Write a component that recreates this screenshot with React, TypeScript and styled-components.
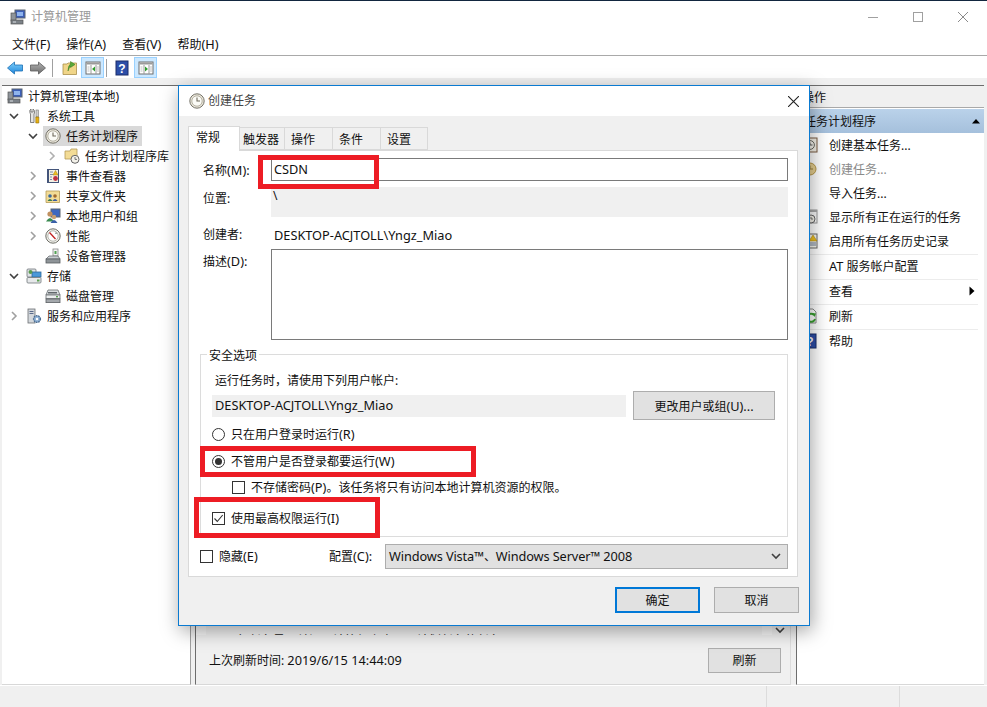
import React from 'react';
import styled, { createGlobalStyle } from 'styled-components';

const GlobalStyle = createGlobalStyle`
  html, body {
    margin: 0;
    padding: 0;
    background: #f0f0f0;
  }
  body {
    font-family: "Noto Sans", "Noto Sans CJK SC", sans-serif;
    font-size: 12px;
    color: #111;
  }
`;

const Latin = styled.span`
  font-size: 12.75px;
`;

const Page = styled.div`
  position: relative;
  width: 987px;
  height: 707px;
  overflow: hidden;
  display: flex;
  flex-direction: column;
  background: #f0f0f0;
  border-top: 1px solid #12263f;
  box-sizing: border-box;
`;

const TitleBar = styled.div`
  height: 32px;
  flex: none;
  box-sizing: border-box;
  display: flex;
  align-items: center;
  padding: 0 0 1px 10px;
  background: #fff;
`;

const TitleText = styled.span`
  margin-left: 5px;
  padding-bottom: 1px;
  color: #999;
  font-size: 12px;
`;

const WindowButtons = styled.div`
  margin-left: auto;
  display: flex;
  align-items: center;
  padding-right: 19px;
  gap: 35px;
`;

const MenuBar = styled.div`
  height: 22px;
  flex: none;
  display: flex;
  align-items: center;
  padding-left: 12px;
  gap: 16px;
  background: #fff;
  border-bottom: 1px solid #a9a9a9;
`;

const ToolBar = styled.div`
  height: 22px;
  flex: none;
  box-sizing: border-box;
  display: flex;
  align-items: center;
  padding: 1px 0 0 7px;
  background: #fff;
`;

const ToolGap = styled.div<{ $w: number }>`
  width: ${(p) => p.$w}px;
  flex: none;
`;

const ToolSep = styled.div`
  width: 1px;
  height: 18px;
  background: #a0a0a0;
  flex: none;
`;

const ToolToggle = styled.div`
  width: 23px;
  height: 21px;
  box-sizing: border-box;
  display: flex;
  align-items: center;
  justify-content: center;
  background: #cce8ff;
  border: 1px solid #99d1ff;
  flex: none;
`;

const Workspace = styled.div`
  margin-top: 7px;
  flex: none;
  height: 600px;
  display: flex;
  padding-left: 2px;
  padding-right: 2px;
  border-bottom: 1px solid #fff;
`;

const TreePane = styled.div`
  width: 189px;
  flex: none;
  background: #fff;
  border-top: 1px solid #6d6d6d;
  border-right: 1px solid #a0a0a0;
  border-bottom: 1px solid #d8d8d8;
  box-sizing: border-box;
`;

const TreeRow = styled.div<{ $level: number }>`
  height: 20px;
  display: flex;
  align-items: center;
  padding-left: ${(p) => (p.$level === 0 ? 3 : p.$level * 19 - 15)}px;
`;

const ChevronSlot = styled.div`
  width: 16px;
  height: 16px;
  flex: none;
  margin-right: 2px;
  display: flex;
  align-items: center;
  justify-content: center;
`;

const TreeLabel = styled.div<{ $selected?: boolean }>`
  height: 20px;
  display: flex;
  align-items: center;
  gap: 5px;
  padding: 0 4px 0 2px;
  white-space: nowrap;
  background: ${(p) => (p.$selected ? '#d9d9d9' : 'transparent')};
`;

const CenterPane = styled.div`
  margin-left: 4px;
  width: 596px;
  flex: none;
  display: flex;
  flex-direction: column;
  background: #f0f0f0;
  box-sizing: border-box;
  border-left: 1px solid #6d6d6d;
  border-top: 1px solid #6d6d6d;
  border-right: 1px solid #dcdcdc;
  border-bottom: 1px solid #d8d8d8;
`;

const ScrollArea = styled.div`
  flex: 1;
  display: flex;
  align-items: flex-end;
  justify-content: space-between;
  overflow: hidden;
`;

const SectionTile = styled.div`
  width: 10px;
  height: 14px;
  background: #f7f7f7;
  flex: none;
`;

const ClippedText = styled.div`
  margin-left: 19px;
  margin-bottom: -14px;
  white-space: nowrap;
  color: #222;
`;

const ScrollGutter = styled.div`
  margin-left: auto;
  display: flex;
  align-items: flex-end;
  gap: 3px;
  padding-right: 5px;
`;

const CenterFooter = styled.div`
  height: 49px;
  flex: none;
  box-sizing: border-box;
  display: flex;
  align-items: center;
  justify-content: space-between;
  padding: 1px 9px 0 13px;
`;

const ActionPane = styled.div`
  margin-left: 5px;
  width: 188px;
  flex: none;
  background: #fff;
  box-sizing: border-box;
  border-left: 1px solid #6d6d6d;
  border-top: 1px solid #6d6d6d;
  border-bottom: 1px solid #d8d8d8;
`;

const ActionHeader = styled.div`
  height: 21px;
  display: flex;
  align-items: center;
  padding-left: 5px;
  background: #f0f0f0;
  border-bottom: 1px solid #a9a9a9;
`;

const ActionGroup = styled.div`
  margin-top: 1px;
  height: 24px;
  display: flex;
  align-items: center;
  justify-content: space-between;
  padding: 0 3px 0 7px;
  background: linear-gradient(#bad2ea, #a5c0dc);
`;

const ActionRow = styled.div<{ $disabled?: boolean; $tall?: boolean; $rule?: boolean }>`
  height: ${(p) => (p.$tall ? 25 : 24)}px;
  box-sizing: border-box;
  display: flex;
  align-items: center;
  padding: 0 1px ${(p) => (p.$tall ? 1 : 0)}px 5px;
  gap: 11px;
  white-space: nowrap;
  margin-right: 6px;
  color: ${(p) => (p.$disabled ? '#8a8a8a' : '#111')};
  box-shadow: ${(p) => (p.$rule ? '0 1px 0 #ececec' : 'none')};
`;

const ActionIconSlot = styled.div`
  width: 16px;
  height: 16px;
  flex: none;
`;

const RowEnd = styled.div`
  margin-left: auto;
  display: flex;
`;

const StatusBar = styled.div`
  flex: 1;
  display: flex;
  justify-content: flex-end;
  padding-right: 3px;
`;

const StatusCell = styled.div<{ $w: number }>`
  width: ${(p) => p.$w}px;
  box-sizing: border-box;
  border-left: 1px solid #dcdcdc;
`;

const Dialog = styled.div`
  position: absolute;
  left: 178px;
  top: 84px;
  width: 632px;
  height: 541px;
  box-sizing: border-box;
  display: flex;
  flex-direction: column;
  background: #f0f0f0;
  border: 1px solid #0a7ad1;
  box-shadow: 2px 5px 18px rgba(0, 0, 0, 0.36);
`;

const DialogTitle = styled.div`
  height: 30px;
  flex: none;
  display: flex;
  align-items: center;
  padding: 0 10px 0 10px;
  background: #fff;
`;

const DialogTitleText = styled.span`
  margin-left: 3px;
  padding-bottom: 2px;
  color: #444;
`;

const DialogClose = styled.div`
  margin-left: auto;
  display: flex;
`;

const DialogBody = styled.div`
  flex: 1;
  display: flex;
  flex-direction: column;
  padding: 10px 11px 0 9px;
`;

const Tabs = styled.div`
  height: 24px;
  flex: none;
  display: flex;
  align-items: flex-end;
  position: relative;
  z-index: 1;
`;

const Tab = styled.div<{ $active?: boolean; $w: number; $pl: number }>`
  width: ${(p) => p.$w}px;
  height: ${(p) => (p.$active ? 25 : 23)}px;
  box-sizing: border-box;
  display: flex;
  align-items: center;
  padding-left: ${(p) => p.$pl}px;
  padding-bottom: ${(p) => (p.$active ? 4 : 0)}px;
  margin-bottom: ${(p) => (p.$active ? -1 : 0)}px;
  margin-left: ${(p) => (p.$active ? 0 : -1)}px;
  background: ${(p) => (p.$active ? '#fff' : '#f0f0f0')};
  border: 1px solid #d9d9d9;
  border-bottom: ${(p) => (p.$active ? 'none' : '1px solid #d9d9d9')};
`;

const TabPanel = styled.div`
  height: 427px;
  flex: none;
  box-sizing: border-box;
  display: flex;
  flex-direction: column;
  background: #fff;
  border: 1px solid #d9d9d9;
  padding: 7px 9px 0 11px;
`;

const FormRow = styled.div<{ $mt?: number }>`
  display: grid;
  grid-template-columns: 68px 1fr;
  padding-left: 3px;
  margin-top: ${(p) => p.$mt ?? 0}px;
`;

const FieldLabel = styled.div<{ $pt?: number }>`
  padding-top: ${(p) => p.$pt ?? 0}px;
  line-height: 20px;
  white-space: nowrap;
`;

const TextInput = styled.div`
  height: 23px;
  box-sizing: border-box;
  border: 1px solid #7a7a7a;
  padding-left: 2px;
  line-height: 21px;
`;

const ReadOnlyBox = styled.div`
  height: 30px;
  background: #f0f0f0;
  padding-left: 2px;
  line-height: 18px;
`;

const PlainValue = styled.div`
  padding-left: 3px;
  line-height: 20px;
`;

const TextArea = styled.div`
  height: 91px;
  box-sizing: border-box;
  border: 1px solid #7a7a7a;
`;

const GroupBox = styled.div`
  position: relative;
  margin-top: 14px;
  height: 183px;
  flex: none;
  box-sizing: border-box;
  border: 1px solid #dcdcdc;
  padding: 17px 12px 0 11px;
`;

const GroupLegend = styled.div`
  position: absolute;
  left: 6px;
  top: -8px;
  padding: 0 2px;
  line-height: 18px;
  background: #fff;
`;

const GroupIntro = styled.div`
  line-height: 18px;
  padding-left: 3px;
`;

const AccountRow = styled.div`
  display: flex;
  align-items: center;
  margin-top: 1px;
  gap: 7px;
`;

const AccountBox = styled.div`
  flex: 1;
  height: 22px;
  background: #f0f0f0;
  padding-left: 3px;
  line-height: 20px;
  overflow: hidden;
`;

const PushButton = styled.div<{ $w: number; $h?: number; $default?: boolean }>`
  width: ${(p) => p.$w}px;
  height: ${(p) => p.$h ?? 26}px;
  flex: none;
  box-sizing: border-box;
  display: flex;
  align-items: center;
  justify-content: center;
  background: #e1e1e1;
  border: ${(p) => (p.$default ? '2px solid #0078d7' : '1px solid #adadad')};
  white-space: nowrap;
`;

const OptionRow = styled.div<{ $mt: number; $indent?: number }>`
  height: 20px;
  display: flex;
  align-items: center;
  gap: 6px;
  margin-top: ${(p) => p.$mt}px;
  padding-left: ${(p) => p.$indent ?? 0}px;
  white-space: nowrap;
`;

const Radio = styled.div<{ $on?: boolean }>`
  width: 13px;
  height: 13px;
  flex: none;
  box-sizing: border-box;
  border: 1px solid #333;
  border-radius: 50%;
  display: flex;
  align-items: center;
  justify-content: center;
  &::after {
    content: '';
    width: 7px;
    height: 7px;
    border-radius: 50%;
    background: ${(p) => (p.$on ? '#333' : 'transparent')};
  }
`;

const CheckBox = styled.div`
  width: 13px;
  height: 13px;
  flex: none;
  box-sizing: border-box;
  border: 1px solid #333;
  display: flex;
  align-items: center;
  justify-content: center;
`;

const BottomRow = styled.div`
  margin-top: 7px;
  height: 25px;
  display: flex;
  align-items: center;
`;

const HiddenOption = styled.div`
  width: 129px;
  flex: none;
  display: flex;
  align-items: center;
  gap: 6px;
  padding-bottom: 1px;
`;

const ConfigLabel = styled.div`
  width: 56px;
  flex: none;
  padding-bottom: 2px;
`;

const SelectBox = styled.div`
  flex: 1;
  height: 25px;
  box-sizing: border-box;
  display: flex;
  align-items: center;
  justify-content: space-between;
  padding: 0 6px 2px 3px;
  letter-spacing: -0.11px;
  background: #e1e1e1;
  border: 1px solid #adadad;
`;

const DialogFooter = styled.div`
  display: flex;
  justify-content: flex-end;
  gap: 14px;
  margin-top: 10px;
  margin-right: -1px;
`;

const Highlight = styled.div<{ $x: number; $y: number; $w: number; $h: number }>`
  position: absolute;
  left: ${(p) => p.$x}px;
  top: ${(p) => p.$y}px;
  width: ${(p) => p.$w}px;
  height: ${(p) => p.$h}px;
  box-sizing: border-box;
  border: 5px solid #ed1c24;
  pointer-events: none;
`;

const Ico = ({ children, size = 16 }: { children: React.ReactNode; size?: number }) => (
  <svg width={size} height={size} viewBox="0 0 16 16" style={{ flex: 'none', display: 'block' }}>
    {children}
  </svg>
);

const ComputerIcon = () => (
  <Ico>
    <rect x="5" y="1" width="10" height="8" fill="#3c5fb8" stroke="#5a6470" />
    <rect x="7" y="3" width="6" height="4" fill="#8fb4ee" />
    <rect x="1" y="4" width="5" height="8" fill="#8e949a" stroke="#555" strokeWidth="0.7" />
    <rect x="1" y="11" width="12" height="4" fill="#7c8288" stroke="#555" strokeWidth="0.7" />
    <rect x="3" y="12.5" width="3" height="1" fill="#d8dce0" />
  </Ico>
);

const ToolsIcon = () => (
  <Ico>
    <path d="M5 1 L5 4 L7 4 L7 1 Q9 2 8.5 5 L8 6 L8 14.5 L4.5 14.5 L4.5 6 L4 5 Q3 2 5 1Z" fill="#e4e4e4" stroke="#666" strokeWidth="0.8" />
    <rect x="10" y="2" width="2.4" height="7" fill="#cfcfcf" stroke="#777" strokeWidth="0.6" />
    <path d="M9.8 9 h3 v6 h-3z" fill="#e8b010" stroke="#8c6a00" strokeWidth="0.6" />
  </Ico>
);

const ClockIcon = () => (
  <Ico>
    <circle cx="8" cy="8" r="7.2" fill="#e9e6da" stroke="#77746a" />
    <circle cx="8" cy="8" r="5.2" fill="#fbfbf6" stroke="#b6b2a4" />
    <path d="M8 4.4 V8 H11" fill="none" stroke="#6f6a5c" strokeWidth="1.1" />
  </Ico>
);

const ClockFolderIcon = () => (
  <Ico>
    <path d="M1 3 h5 l1 -2 h6 v10 h-12z" fill="#f3dc96" stroke="#b49a55" strokeWidth="0.8" />
    <circle cx="11" cy="11.3" r="4" fill="#f4f2ea" stroke="#666" />
    <path d="M11 9 V11.4 H13" fill="none" stroke="#555" strokeWidth="0.8" />
  </Ico>
);

const EventIcon = () => (
  <Ico>
    <rect x="2" y="1" width="12" height="14" fill="#44557a" />
    <rect x="4" y="2" width="9" height="12" fill="#f4f1e4" />
    <path d="M5 4 h3 M5 6.5 h3 M5 9 h2 M5 11.5 h2" stroke="#7c8ca8" />
    <path d="M10.5 2.5 L13 7 H8z" fill="#f0c020" stroke="#a07c10" strokeWidth="0.5" />
    <circle cx="10.5" cy="10.5" r="2.4" fill="#c03040" />
  </Ico>
);

const ShareIcon = () => (
  <Ico>
    <path d="M1 3 h13.5 v11.5 h-13.5z" fill="#f3dc96" stroke="#b49a55" strokeWidth="0.8" />
    <circle cx="5" cy="8" r="1.8" fill="#3a6aa0" />
    <path d="M2.5 13 q2.5 -4 5 0z" fill="#3a7a50" />
    <circle cx="10" cy="8" r="1.8" fill="#a06a30" />
    <path d="M7.5 13 q2.5 -4 5 0z" fill="#3a5aa0" />
  </Ico>
);

const UsersIcon = () => (
  <Ico>
    <rect x="6" y="1" width="9" height="8" fill="#3c68c0" stroke="#5a6470" />
    <circle cx="5" cy="6" r="2.6" fill="#c09060" />
    <path d="M1 13.5 q4 -7 8 0z" fill="#3a8a50" />
    <circle cx="9" cy="9" r="2.2" fill="#c8a070" />
    <path d="M5.5 15 q3.5 -6 7 0z" fill="#3a60a8" />
  </Ico>
);

const GaugeIcon = () => (
  <Ico>
    <circle cx="8" cy="8" r="7.2" fill="#f0f0ea" stroke="#6f6f68" />
    <circle cx="8" cy="8" r="5.2" fill="#fff" stroke="#b8b8b0" />
    <path d="M4.5 4.5 L10.5 11" stroke="#c02020" strokeWidth="1.3" />
    <path d="M11 4.5 v1.5" stroke="#555" />
  </Ico>
);

const DeviceIcon = () => (
  <Ico>
    <rect x="8" y="1" width="5" height="7" fill="#f2f2f2" stroke="#888" strokeWidth="0.8" />
    <rect x="9.5" y="3" width="2" height="3" fill="#50a050" />
    <path d="M4 8 H13 L15 11 H1z" fill="#c8ccd0" stroke="#6a6e72" strokeWidth="0.8" />
    <rect x="1" y="11" width="14" height="4" fill="#8e9498" stroke="#585c60" strokeWidth="0.8" />
  </Ico>
);

const StorageIcon = () => (
  <Ico>
    <rect x="1" y="1" width="9" height="8" rx="1" fill="#dfe3e6" stroke="#6e7478" strokeWidth="0.8" />
    <rect x="6" y="4" width="9" height="5" fill="#4a98d8" stroke="#2d6a9c" strokeWidth="0.8" />
    <circle cx="4.5" cy="4" r="2" fill="#5a9c50" />
    <rect x="1" y="9.5" width="14" height="5.5" rx="1" fill="#e6e8ea" stroke="#70767a" strokeWidth="0.8" />
    <rect x="11" y="11.5" width="2.5" height="2" fill="#5aa050" />
  </Ico>
);

const DiskIcon = () => (
  <Ico>
    <path d="M3 2 H13 L15 7 H1z" fill="#d8dcde" stroke="#6a6e72" strokeWidth="0.8" />
    <rect x="3" y="4" width="9" height="1.5" fill="#60666a" />
    <rect x="1" y="7" width="14" height="3.6" fill="#eceeef" stroke="#6a6e72" strokeWidth="0.8" />
    <rect x="1" y="11" width="14" height="3.6" fill="#a4a8ac" stroke="#5c6064" strokeWidth="0.8" />
    <rect x="11" y="8" width="2" height="1.4" fill="#58a050" />
  </Ico>
);

const ServiceIcon = () => (
  <Ico>
    <rect x="2" y="1" width="7" height="14" fill="#d4d8dc" stroke="#6a6e72" strokeWidth="0.8" />
    <path d="M3.5 3.5 h4 M3.5 5.5 h4" stroke="#5a6a8a" />
    <circle cx="11" cy="11" r="3.4" fill="#8eb0d4" stroke="#4c6c90" strokeWidth="1.4" strokeDasharray="1.6 0.8" />
    <circle cx="11" cy="11" r="1.2" fill="#fff" />
  </Ico>
);

const BackIcon = () => (
  <Ico>
    <defs>
      <linearGradient id="backFill" x1="0" y1="0" x2="0" y2="1">
        <stop offset="0" stopColor="#7fd0fa" />
        <stop offset="1" stopColor="#1f86dc" />
      </linearGradient>
    </defs>
    <path d="M0.5 8 L7.5 2 V5 H15.5 V11 H7.5 V14z" fill="url(#backFill)" stroke="#1c6fb4" strokeWidth="0.8" />
  </Ico>
);

const ForwardIcon = () => (
  <Ico>
    <defs>
      <linearGradient id="forwardFill" x1="0" y1="0" x2="0" y2="1">
        <stop offset="0" stopColor="#b4b4b4" />
        <stop offset="1" stopColor="#6c6c6c" />
      </linearGradient>
    </defs>
    <path d="M15.5 8 L8.5 2 V5 H0.5 V11 H8.5 V14z" fill="url(#forwardFill)" stroke="#5c5c5c" strokeWidth="0.8" />
  </Ico>
);

const FolderUpIcon = () => (
  <Ico>
    <path d="M1 4 h4 l1 -1 h8.5 v11.5 h-13.5z" fill="#f0d588" stroke="#a98f4a" strokeWidth="0.8" />
    <path d="M6 11 Q6 5.5 8.5 4 V1.5 L13 4.5 L8.5 7.5 V6 Q7.5 7 6 11Z" fill="#58a838" stroke="#347a1e" strokeWidth="0.5" />
  </Ico>
);

const PaneIcon = ({ arrow }: { arrow: 'left' | 'right' }) => (
  <Ico>
    <rect x="1" y="2" width="14" height="12" fill="#fff" stroke="#6f6f6f" />
    <rect x="1.5" y="2.5" width="13" height="2" fill="#9a9a9a" />
    <path d="M6 5 V14 M11 5 V14" stroke="#9a9a9a" />
    <path d="M2.5 7 h2 M2.5 9 h2 M2.5 11 h2 M12 7 h2 M12 9 h2 M12 11 h2" stroke="#c0c0c0" />
    <path d={arrow === 'left' ? 'M10 6.5 V11.5 L7 9z' : 'M7 6.5 V11.5 L10 9z'} fill="#2e9e2e" />
  </Ico>
);

const HelpIcon = () => (
  <Ico>
    <rect x="2" y="1" width="12" height="14" fill="#2c4ea8" stroke="#1a2c6a" />
    <text x="8" y="12.5" fontSize="12" fontWeight="700" fill="#fff" textAnchor="middle" fontFamily="Liberation Sans, sans-serif">?</text>
  </Ico>
);

const TaskIcon = () => (
  <Ico>
    <rect x="1" y="1" width="14" height="14" fill="#f4f0e6" stroke="#7a5a40" />
    <circle cx="8" cy="8" r="4.4" fill="#f8f6ee" stroke="#6a6a62" />
    <path d="M8 5.5 V8 H10.5" fill="none" stroke="#555" />
  </Ico>
);

const NewTaskIcon = () => (
  <Ico>
    <circle cx="8" cy="8" r="6" fill="#e8d090" stroke="#b89848" />
    <path d="M8 4.5 V8 H11" fill="none" stroke="#9a8040" />
  </Ico>
);

const RunningIcon = () => (
  <Ico>
    <rect x="1" y="1" width="14" height="13" fill="#f8f8f8" stroke="#9a9a9a" />
    <rect x="1" y="1" width="14" height="2" fill="#a8a8a8" />
    <circle cx="9" cy="10" r="4" fill="#f4f2ea" stroke="#666" />
    <path d="M9 8 V10 H11" fill="none" stroke="#555" strokeWidth="0.8" />
  </Ico>
);

const HistoryIcon = () => (
  <Ico>
    <rect x="2" y="1" width="13" height="14" fill="#f8f8f0" stroke="#6a6a6a" />
    <path d="M11 2 L15 8 H7z" fill="#f0c020" stroke="#a07c10" strokeWidth="0.5" />
    <path d="M6 10 h8 M6 12 h8" stroke="#6a7a98" />
  </Ico>
);

const RefreshIcon = () => (
  <Ico>
    <path d="M2 1 h9 l3 3 v11 h-12z" fill="#fff" stroke="#8a8a8a" />
    <path d="M12 7 a4 4 0 1 0 1 4" fill="none" stroke="#3aa030" strokeWidth="2" />
    <path d="M10 5 L14 5.5 L12.5 9z" fill="#3aa030" />
  </Ico>
);

const Chevron = ({ open, light }: { open?: boolean; light?: boolean }) => (
  <svg width="10" height="10" viewBox="0 0 10 10">
    <path
      d={open ? 'M1 3 L5 7 L9 3' : 'M3 1 L7 5 L3 9'}
      fill="none"
      stroke={open ? '#404040' : light ? '#b0b0b0' : '#a0a0a0'}
      strokeWidth="1.6"
    />
  </svg>
);

const SmallTriangle = ({ dir }: { dir: 'up' | 'right' }) => (
  <svg width="10" height="10" viewBox="0 0 10 10">
    <path d={dir === 'up' ? 'M1 7.5 L5 3 L9 7.5z' : 'M2.5 0.5 L7.5 5 L2.5 9.5z'} fill="#000" />
  </svg>
);

const CheckMark = () => (
  <svg width="11" height="11" viewBox="0 0 11 11">
    <path d="M1.5 5.5 L4.3 8.5 L9.7 2" fill="none" stroke="#333" strokeWidth="1.1" />
  </svg>
);

const CloseGlyph = ({ color, size }: { color: string; size: number }) => (
  <svg width={size} height={size} viewBox="0 0 10 10">
    <path d="M0 0 L10 10 M10 0 L0 10" stroke={color} strokeWidth="1" />
  </svg>
);

const MinGlyph = () => (
  <svg width="10" height="10" viewBox="0 0 10 10">
    <path d="M0 5.5 H10" stroke="#a0a0a0" />
  </svg>
);

const MaxGlyph = () => (
  <svg width="10" height="10" viewBox="0 0 10 10">
    <rect x="0.5" y="0.5" width="9" height="9" fill="none" stroke="#a0a0a0" />
  </svg>
);

type TreeItem = {
  level: number;
  text: string;
  icon: React.ReactNode;
  chevron?: 'open' | 'closed' | 'light';
  selected?: boolean;
};

const treeItems: TreeItem[] = [
  { level: 0, text: '计算机管理(本地)', icon: <ComputerIcon /> },
  { level: 1, text: '系统工具', icon: <ToolsIcon />, chevron: 'open' },
  { level: 2, text: '任务计划程序', icon: <ClockIcon />, chevron: 'open', selected: true },
  { level: 3, text: '任务计划程序库', icon: <ClockFolderIcon />, chevron: 'light' },
  { level: 2, text: '事件查看器', icon: <EventIcon />, chevron: 'closed' },
  { level: 2, text: '共享文件夹', icon: <ShareIcon />, chevron: 'closed' },
  { level: 2, text: '本地用户和组', icon: <UsersIcon />, chevron: 'closed' },
  { level: 2, text: '性能', icon: <GaugeIcon />, chevron: 'closed' },
  { level: 2, text: '设备管理器', icon: <DeviceIcon /> },
  { level: 1, text: '存储', icon: <StorageIcon />, chevron: 'open' },
  { level: 2, text: '磁盘管理', icon: <DiskIcon /> },
  { level: 1, text: '服务和应用程序', icon: <ServiceIcon />, chevron: 'closed' },
];

type ActionItem = {
  text: React.ReactNode;
  icon?: React.ReactNode;
  disabled?: boolean;
  tall?: boolean;
  rule?: boolean;
  submenu?: boolean;
};

const actionItems: ActionItem[] = [
  { text: '创建基本任务...', icon: <TaskIcon /> },
  { text: '创建任务...', icon: <NewTaskIcon />, disabled: true },
  { text: '导入任务...' },
  { text: '显示所有正在运行的任务', icon: <RunningIcon /> },
  { text: '启用所有任务历史记录', icon: <HistoryIcon />, tall: true, rule: true },
  { text: <><Latin>AT</Latin> 服务帐户配置</>, tall: true, rule: true },
  { text: '查看', tall: true, rule: true, submenu: true },
  { text: '刷新', icon: <RefreshIcon />, tall: true, rule: true },
  { text: '帮助', icon: <HelpIcon />, tall: true },
];

const App: React.FC = () => (
  <Page>
    <GlobalStyle />
    <TitleBar>
      <ComputerIcon />
      <TitleText>计算机管理</TitleText>
      <WindowButtons>
        <MinGlyph />
        <MaxGlyph />
        <CloseGlyph color="#8a8a8a" size={10} />
      </WindowButtons>
    </TitleBar>
    <MenuBar>
      <span>文件<Latin>(F)</Latin></span>
      <span>操作<Latin>(A)</Latin></span>
      <span>查看<Latin>(V)</Latin></span>
      <span>帮助<Latin>(H)</Latin></span>
    </MenuBar>
    <ToolBar>
      <BackIcon />
      <ToolGap $w={7} />
      <ForwardIcon />
      <ToolGap $w={6} />
      <ToolSep />
      <ToolGap $w={9} />
      <FolderUpIcon />
      <ToolGap $w={3} />
      <ToolToggle>
        <PaneIcon arrow="left" />
      </ToolToggle>
      <ToolGap $w={2} />
      <ToolSep />
      <ToolGap $w={7} />
      <HelpIcon />
      <ToolGap $w={4} />
      <ToolToggle>
        <PaneIcon arrow="right" />
      </ToolToggle>
    </ToolBar>
    <Workspace>
      <TreePane>
        {treeItems.map((item) => (
          <TreeRow key={item.text} $level={item.level}>
            {item.level > 0 && (
              <ChevronSlot>
                {item.chevron && <Chevron open={item.chevron === 'open'} light={item.chevron === 'light'} />}
              </ChevronSlot>
            )}
            <TreeLabel $selected={item.selected}>
              {item.icon}
              <span>{item.text}</span>
            </TreeLabel>
          </TreeRow>
        ))}
      </TreePane>
      <CenterPane>
        <ScrollArea>
          <SectionTile />
          <ClippedText>运行任务是否关闭了计算机上启用且计划任务的任务</ClippedText>
          <ScrollGutter>
            <SectionTile />
            <Chevron open />
          </ScrollGutter>
        </ScrollArea>
        <CenterFooter>
          <span>上次刷新时间: <Latin>2019/6/15 14:44:09</Latin></span>
          <PushButton $w={73} $h={25}>刷新</PushButton>
        </CenterFooter>
      </CenterPane>
      <ActionPane>
        <ActionHeader>操作</ActionHeader>
        <ActionGroup>
          <span>任务计划程序</span>
          <SmallTriangle dir="up" />
        </ActionGroup>
        {actionItems.map((item, i) => (
          <ActionRow key={i} $disabled={item.disabled} $tall={item.tall} $rule={item.rule}>
            <ActionIconSlot>{item.icon}</ActionIconSlot>
            <span>{item.text}</span>
            {item.submenu && (
              <RowEnd>
                <SmallTriangle dir="right" />
              </RowEnd>
            )}
          </ActionRow>
        ))}
      </ActionPane>
    </Workspace>
    <StatusBar>
      <StatusCell $w={133} />
      <StatusCell $w={85} />
    </StatusBar>

    <Dialog>
      <DialogTitle>
        <ClockIcon />
        <DialogTitleText>创建任务</DialogTitleText>
        <DialogClose>
          <CloseGlyph color="#222" size={11} />
        </DialogClose>
      </DialogTitle>
      <DialogBody>
        <Tabs>
          <Tab $active $w={52} $pl={7}>常规</Tab>
          <Tab $w={46} $pl={3}>触发器</Tab>
          <Tab $w={49} $pl={6}>操作</Tab>
          <Tab $w={49} $pl={6}>条件</Tab>
          <Tab $w={48} $pl={6}>设置</Tab>
        </Tabs>
        <TabPanel>
          <FormRow>
            <FieldLabel $pt={2}>名称<Latin>(M):</Latin></FieldLabel>
            <TextInput><Latin>CSDN</Latin></TextInput>
          </FormRow>
          <FormRow $mt={6}>
            <FieldLabel $pt={2}>位置:</FieldLabel>
            <ReadOnlyBox>\</ReadOnlyBox>
          </FormRow>
          <FormRow $mt={8}>
            <FieldLabel>创建者:</FieldLabel>
            <PlainValue><Latin>DESKTOP-ACJTOLL\Yngz_Miao</Latin></PlainValue>
          </FormRow>
          <FormRow $mt={3}>
            <FieldLabel $pt={2}>描述<Latin>(D):</Latin></FieldLabel>
            <TextArea />
          </FormRow>
          <GroupBox>
            <GroupLegend>安全选项</GroupLegend>
            <GroupIntro>运行任务时，请使用下列用户帐户:</GroupIntro>
            <AccountRow>
              <AccountBox><Latin>DESKTOP-ACJTOLL\Yngz_Miao</Latin></AccountBox>
              <PushButton $w={142} $h={29}>更改用户或组<Latin>(U)...</Latin></PushButton>
            </AccountRow>
            <OptionRow $mt={4}>
              <Radio />
              <span>只在用户登录时运行<Latin>(R)</Latin></span>
            </OptionRow>
            <OptionRow $mt={7}>
              <Radio $on />
              <span>不管用户是否登录都要运行<Latin>(W)</Latin></span>
            </OptionRow>
            <OptionRow $mt={6} $indent={20}>
              <CheckBox />
              <span>不存储密码<Latin>(P)</Latin>。该任务将只有访问本地计算机资源的权限。</span>
            </OptionRow>
            <OptionRow $mt={11}>
              <CheckBox>
                <CheckMark />
              </CheckBox>
              <span>使用最高权限运行<Latin>(I)</Latin></span>
            </OptionRow>
          </GroupBox>
          <BottomRow>
            <HiddenOption>
              <CheckBox />
              <span>隐藏<Latin>(E)</Latin></span>
            </HiddenOption>
            <ConfigLabel>配置<Latin>(C):</Latin></ConfigLabel>
            <SelectBox>
              <span><Latin>Windows Vista™</Latin>、<Latin>Windows Server™ 2008</Latin></span>
              <Chevron open />
            </SelectBox>
          </BottomRow>
        </TabPanel>
        <DialogFooter>
          <PushButton $w={85} $default>确定</PushButton>
          <PushButton $w={85}>取消</PushButton>
        </DialogFooter>
      </DialogBody>
    </Dialog>

    <Highlight $x={258} $y={154} $w={121} $h={34} />
    <Highlight $x={200} $y={445} $w={276} $h={31} />
    <Highlight $x={194} $y={496} $w={186} $h={41} />
  </Page>
);

export default App;
